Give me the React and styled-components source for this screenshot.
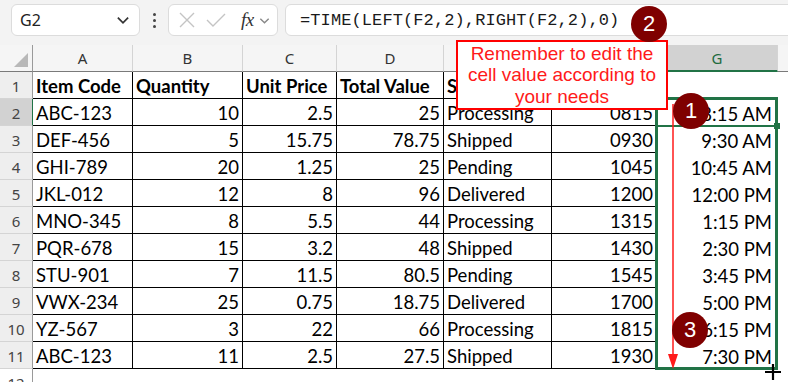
import React from 'react';
import styled, { createGlobalStyle } from 'styled-components';

const GlobalStyle = createGlobalStyle`
  html, body {
    margin: 0;
    padding: 0;
    background: #fff;
    overflow: hidden;
  }
`;

const COLS = [
  { key: 'A', w: 100 },
  { key: 'B', w: 110 },
  { key: 'C', w: 94 },
  { key: 'D', w: 107 },
  { key: 'E', w: 108 },
  { key: 'F', w: 105 },
  { key: 'G', w: 121 },
];

const HEAD = ['Item Code', 'Quantity', 'Unit Price', 'Total Value', 'Status', 'Time'];

const ROWS = [
  ['ABC-123', 10, 2.5, 25, 'Processing', '0815', '8:15 AM'],
  ['DEF-456', 5, 15.75, 78.75, 'Shipped', '0930', '9:30 AM'],
  ['GHI-789', 20, 1.25, 25, 'Pending', '1045', '10:45 AM'],
  ['JKL-012', 12, 8, 96, 'Delivered', '1200', '12:00 PM'],
  ['MNO-345', 8, 5.5, 44, 'Processing', '1315', '1:15 PM'],
  ['PQR-678', 15, 3.2, 48, 'Shipped', '1430', '2:30 PM'],
  ['STU-901', 7, 11.5, 80.5, 'Pending', '1545', '3:45 PM'],
  ['VWX-234', 25, 0.75, 18.75, 'Delivered', '1700', '5:00 PM'],
  ['YZ-567', 3, 22, 66, 'Processing', '1815', '6:15 PM'],
  ['ABC-123', 11, 2.5, 27.5, 'Shipped', '1930', '7:30 PM'],
];

const Page = styled.div`
  position: relative;
  width: 788px;
  height: 382px;
  overflow: hidden;
  display: flex;
  flex-direction: column;
`;

const Toolbar = styled.div`
  flex: none;
  height: 45px;
  box-sizing: border-box;
  background: #f3f3f3;
  display: flex;
  align-items: flex-start;
  padding: 4px 0 0 11px;
`;

const Box = styled.div`
  height: 32px;
  box-sizing: border-box;
  background: #fff;
  border: 1px solid #dcdcdc;
  border-radius: 6px;
  display: flex;
  align-items: center;
  width: ${(p) => (p.$w ? `${p.$w}px` : 'auto')};
  flex: ${(p) => (p.$grow ? 1 : 'none')};
  margin-right: ${(p) => (p.$grow ? '-6px' : '0')};
`;

const NameText = styled.span`
  font-family: 'Noto Sans', 'Open Sans', sans-serif;
  font-size: 16px;
  color: #222;
  padding-left: 8px;
  flex: 1;
`;

const Dots = styled.div`
  width: 28px;
  height: 32px;
  display: flex;
  flex-direction: column;
  align-items: center;
  justify-content: center;
  gap: 3px;
  span {
    width: 3px;
    height: 3px;
    border-radius: 50%;
    background: #444;
  }
`;

const Formula = styled.span`
  font-family: 'Liberation Mono', 'DejaVu Sans Mono', monospace;
  font-size: 17px;
  color: #1a1a1a;
  padding-left: 14px;
  letter-spacing: 0.1px;
`;

const Fx = styled.span`
  font-family: 'Liberation Serif', serif;
  font-style: italic;
  font-size: 19px;
  color: #333;
  margin-left: 14px;
  letter-spacing: -0.5px;
`;

const Sheet = styled.div`
  flex: none;
  display: grid;
  grid-template-columns: 33px ${COLS.map((c) => `${c.w}px`).join(' ')} 1fr;
  grid-auto-rows: 27px;
  font-family: 'Lato', 'Open Sans', sans-serif;
`;

const Corner = styled.div`
  background: #f5f5f5;
  border-right: 1px solid #9a9a9a;
  border-bottom: 1px solid #7a7a7a;
  box-sizing: border-box;
  position: relative;
  &::after {
    content: '';
    position: absolute;
    right: 4px;
    bottom: 4px;
    border-style: solid;
    border-width: 0 0 14px 14px;
    border-color: transparent transparent #b8b8b8 transparent;
  }
`;

const ColHead = styled.div`
  background: ${(p) => (p.$sel ? '#d2d2d2' : '#f5f5f5')};
  border-right: ${(p) => (p.$last ? 'none' : '1px solid #d4d4d4')};
  border-bottom: ${(p) => (p.$sel ? '2px solid #217346' : '1px solid #7a7a7a')};
  box-sizing: border-box;
  display: flex;
  align-items: center;
  justify-content: center;
  font-family: 'Noto Sans', 'Open Sans', sans-serif;
  font-size: 15px;
  color: ${(p) => (p.$sel ? '#1e6b3e' : '#333')};
`;

const RowHead = styled.div`
  background: ${(p) => (p.$sel ? '#d2d2d2' : p.$blank ? '#fff' : '#eeeeee')};
  border-right: 1px solid ${(p) => (p.$sel ? '#217346' : '#9a9a9a')};
  border-bottom: 1px solid #d4d4d4;
  box-sizing: border-box;
  display: flex;
  align-items: center;
  justify-content: center;
  font-family: 'Noto Sans', 'Open Sans', sans-serif;
  font-size: 15px;
  color: #444;
  padding-top: 2px;
`;

const Cell = styled.div`
  box-sizing: border-box;
  border-right: ${(p) => (p.$lined ? '1px solid #000' : 'none')};
  border-bottom: ${(p) => (p.$lined ? '1px solid #000' : 'none')};
  display: flex;
  align-items: flex-end;
  justify-content: ${(p) => (p.$right ? 'flex-end' : 'flex-start')};
  padding: 0 ${(p) => (p.$pad ? p.$pad : 3)}px 1px 3px;
  font-size: 18.5px;
  font-weight: ${(p) => (p.$bold ? 700 : 400)};
  color: #000;
  white-space: nowrap;
  overflow: hidden;
`;

const Selection = styled.div`
  position: absolute;
  left: 655px;
  top: 97px;
  width: 123px;
  height: 273px;
  box-sizing: border-box;
  border: 3px solid #217346;
`;

const ActiveLine = styled.div`
  position: absolute;
  left: 657px;
  top: 125px;
  width: 119px;
  height: 2px;
  background: #217346;
  &::after {
    content: '';
    position: absolute;
    right: -4px;
    top: -2px;
    width: 6px;
    height: 6px;
    background: #217346;
  }
`;

const Callout = styled.div`
  position: absolute;
  left: 456px;
  top: 40px;
  width: 212px;
  height: 70px;
  box-sizing: border-box;
  border: 2px solid #ff0000;
  background: #fff;
  display: flex;
  align-items: center;
  justify-content: center;
  text-align: center;
  font-family: 'Liberation Sans', Arial, sans-serif;
  font-size: 19px;
  line-height: 21.5px;
  color: #ff1a1a;
  white-space: nowrap;
`;

const Badge = styled.div`
  position: absolute;
  left: ${(p) => p.$x - 18}px;
  top: ${(p) => p.$y - 18}px;
  width: 36px;
  height: 36px;
  border-radius: 50%;
  background: #7f0000;
  color: #fff;
  display: flex;
  align-items: center;
  justify-content: center;
  font-family: 'Liberation Sans', Arial, sans-serif;
  font-size: 22px;
`;

const Overlay = styled.svg`
  position: absolute;
  left: 0;
  top: 0;
  pointer-events: none;
`;

const Chevron = ({ size = 14, color = '#333', style }) => (
  <svg width={size} height={size} viewBox="0 0 14 14" style={style}>
    <path d="M2.5 5 L7 9.5 L11.5 5" fill="none" stroke={color} strokeWidth="1.5" />
  </svg>
);

export default function App() {
  return (
    <Page>
      <GlobalStyle />
      <Toolbar>
        <Box $w={129}>
          <NameText>G2</NameText>
          <Chevron size={16} style={{ marginRight: 8 }} />
        </Box>
        <Dots>
          <span />
          <span />
          <span />
        </Dots>
        <Box $w={110}>
          <svg width="18" height="18" viewBox="0 0 18 18" style={{ marginLeft: 9 }}>
            <path d="M2 2 L16 16 M16 2 L2 16" stroke="#c4c4c4" strokeWidth="1.4" />
          </svg>
          <svg width="22" height="18" viewBox="0 0 22 18" style={{ marginLeft: 9 }}>
            <path d="M2 9 L8 15 L20 3" fill="none" stroke="#c4c4c4" strokeWidth="1.4" />
          </svg>
          <Fx>fx</Fx>
          <Chevron size={13} color="#888" style={{ marginLeft: 4 }} />
        </Box>
        <Box $grow style={{ marginLeft: 7 }}>
          <Formula>=TIME(LEFT(F2,2),RIGHT(F2,2),0)</Formula>
        </Box>
      </Toolbar>

      <Sheet>
        <Corner />
        {COLS.map((c) => (
          <ColHead key={c.key} $sel={c.key === 'G'}>
            {c.key}
          </ColHead>
        ))}
        <ColHead $last />

        <RowHead>1</RowHead>
        {HEAD.map((h) => (
          <Cell key={h} $lined $bold>
            {h}
          </Cell>
        ))}
        <Cell />
        <Cell />

        {ROWS.map((r, i) => (
          <React.Fragment key={i}>
            <RowHead $sel={i === 0}>{i + 2}</RowHead>
            <Cell $lined>{r[0]}</Cell>
            <Cell $lined $right>{r[1]}</Cell>
            <Cell $lined $right>{r[2]}</Cell>
            <Cell $lined $right>{r[3]}</Cell>
            <Cell $lined>{r[4]}</Cell>
            <Cell $lined $right>{r[5]}</Cell>
            <Cell $right $pad={6}>{r[6]}</Cell>
            <Cell />
          </React.Fragment>
        ))}

        <RowHead $blank>12</RowHead>
      </Sheet>

      <Selection />
      <ActiveLine />

      <Overlay width="788" height="382">
        <line x1="673" y1="104" x2="673" y2="356" stroke="#ff1a1a" strokeWidth="1.5" />
        <path d="M668 354 L678 354 L673 369 Z" fill="#ff1a1a" />
        <path d="M773 364 L773 380 M765 372 L781 372" stroke="#000" strokeWidth="2.2" />
      </Overlay>

      <Callout>
        Remember to edit the
        <br />
        cell value according to
        <br />
        your needs
      </Callout>

      <Badge $x={649} $y={24}>2</Badge>
      <Badge $x={691} $y={111}>1</Badge>
      <Badge $x={690} $y={330}>3</Badge>
    </Page>
  );
}
